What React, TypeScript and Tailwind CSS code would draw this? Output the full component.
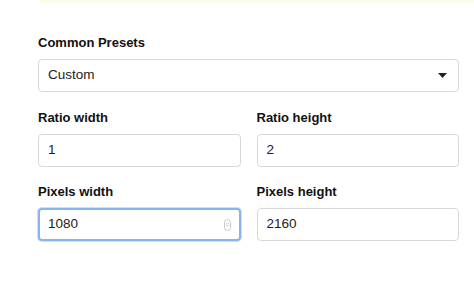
import { ChevronsUpDown } from "lucide-react";

const FONT = { fontFamily: "'Liberation Sans', Arial, sans-serif" };

function Field({ label, value, focused }: { label: string; value: string; focused?: boolean }) {
  return (
    <div className="flex flex-col">
      <label className="text-[13px] leading-[20px] font-bold text-[#111] mb-[6px]">{label}</label>
      <div
        className={
          focused
            ? "relative h-[33px] rounded-[4px] border-2 border-[#86b5f0] bg-white flex items-center pl-[8px] shadow-[0_0_0_1px_#cfe1f9]"
            : "relative h-[33px] rounded-[4px] border border-[#d8d8d8] bg-white flex items-center pl-[9px]"
        }
      >
        <span className="text-[13.5px] text-[#222]">{value}</span>
        {focused && (
          <span className="absolute right-[8px] top-1/2 -translate-y-1/2 w-[7px] h-[12px] rounded-full border border-[#c8c8c8] flex items-center justify-center">
            <ChevronsUpDown size={7} strokeWidth={2} className="text-[#777]" />
          </span>
        )}
      </div>
    </div>
  );
}

export default function App() {
  return (
    <div className="w-[474px] h-[302px] bg-white overflow-hidden" style={FONT}>
      {/* bottom edge of the box above */}
      <div className="ml-[40px] h-[3px] bg-[#fcfce9]" />

      <div className="pl-[38px] pr-[15px] pt-[30px]">
        <label className="block text-[13px] leading-[20px] font-bold text-[#111] mb-[6px]">Common Presets</label>
        <div className="h-[33px] rounded-[4px] border border-[#d8d8d8] bg-white flex items-center justify-between pl-[9px] pr-[11px]">
          <span className="text-[13.5px] text-[#222]">Custom</span>
          <svg width="9" height="5" viewBox="0 0 9 5">
            <path d="M0 0 L9 0 L4.5 5 Z" fill="#222" />
          </svg>
        </div>

        <div className="grid grid-cols-2 gap-x-[16px] gap-y-[15px] mt-[16px]">
          <Field label="Ratio width" value="1" />
          <Field label="Ratio height" value="2" />
          <Field label="Pixels width" value="1080" focused />
          <Field label="Pixels height" value="2160" />
        </div>
      </div>
    </div>
  );
}
